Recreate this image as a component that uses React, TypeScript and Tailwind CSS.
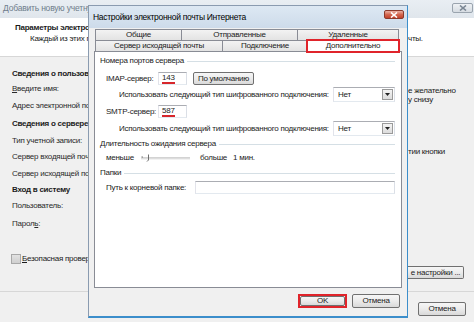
import React from "react";

const btn =
  "flex items-center justify-center border border-[#707070] rounded-[2px] bg-gradient-to-b from-[#f6f6f6] via-[#ebebeb] to-[#d9d9d9] text-[#1b1b1b] whitespace-nowrap";
const field = "bg-white border border-[#abadb3] border-b-[#e3e9ef] border-r-[#dbdfe6] border-l-[#e2e3ea]";

function XIcon({ color }: { color: string }) {
  return (
    <svg width="8" height="6" viewBox="0 0 8 6">
      <path d="M1 0.5 L7 5.5 M7 0.5 L1 5.5" stroke={color} strokeWidth="1.6" />
    </svg>
  );
}

function Select() {
  return (
    <div className={`ml-auto w-[62px] h-full flex items-center ${field} border-[#abadb3]`}>
      <span className="pl-[4px] flex-1">Нет</span>
      <div className="mr-[1px] w-[11px] h-[11px] border border-[#9a9a9a] bg-gradient-to-b from-[#f4f4f4] to-[#dcdcdc] flex items-center justify-center">
        <svg width="5" height="3" viewBox="0 0 5 3">
          <path d="M0 0 H5 L2.5 3 Z" fill="#222" />
        </svg>
      </div>
    </div>
  );
}

function GroupHead({ label }: { label: string }) {
  return (
    <div className="h-[12px] flex items-center gap-[3px]">
      <span className="whitespace-nowrap">{label}</span>
      <div className="flex-1 h-px bg-[#d5dfe5]" />
    </div>
  );
}

function Tab({ w, label, first, selected }: { w: number; label: string; first?: boolean; selected?: boolean }) {
  return (
    <div
      style={{ width: w }}
      className={`h-full flex items-center justify-center whitespace-nowrap border border-[#898c95] ${first ? "" : "-ml-px"} ${
        selected
          ? "relative bg-white outline-2 outline-[#e0242b] -outline-offset-1 z-10"
          : "bg-gradient-to-b from-[#f3f3f3] to-[#e3e3e3]"
      }`}
    >
      {label}
    </div>
  );
}

export default function App() {
  const leftItems: { t: React.ReactNode; mt: number; bold?: boolean }[] = [
    { t: "Сведения о пользователе", mt: 12, bold: true },
    { t: <><u>В</u>ведите имя:</>, mt: 5 },
    { t: "Адрес электронной почты:", mt: 7 },
    { t: "Сведения о сервере", mt: 8, bold: true },
    { t: "Тип учетной записи:", mt: 7 },
    { t: "Сервер входящей почты:", mt: 6 },
    { t: "Сервер исходящей почты (SMTP):", mt: 7 },
    { t: "Вход в систему", mt: 6, bold: true },
    { t: "Пользователь:", mt: 6 },
    { t: <>Парол<u>ь</u>:</>, mt: 8 },
  ];

  return (
    <div className="relative w-[474px] h-[322px] overflow-hidden bg-[#f0f0f0] font-['Liberation_Sans',Arial,sans-serif] text-[8px] tracking-[-0.25px] leading-[10px] text-[#1b1b1b]">
      {/* background window */}
      <div className="flex flex-col h-full">
        <div className="h-[18px] flex items-start bg-gradient-to-b from-[#e9eef3] to-[#e0e6ec]">
          <span className="pl-[3px] pt-[3px] text-[8.5px] tracking-[-0.2px] text-[#6f7d8c] whitespace-nowrap">
            Добавить новую учетную запись
          </span>
          <div className="ml-auto mr-[1px] mt-[3px] w-[21px] h-[10px] border border-[#9aa4ae] rounded-[2px] bg-gradient-to-b from-[#eef1f4] to-[#d6dce2] flex items-center justify-center">
            <XIcon color="#7b8794" />
          </div>
        </div>
        <div className="h-[39px] bg-white border-b border-[#d7d7d7] flex flex-col">
          <div className="pl-[15px] pt-[5px] font-bold whitespace-nowrap">Параметры электронной почты</div>
          <div className="grid grid-cols-[408px_1fr] mt-[1px]">
            <div className="pl-[30px] overflow-hidden whitespace-nowrap">
              Каждый из этих параметров необходим для работы учетной записи электронной по
            </div>
            <div className="whitespace-nowrap">чты.</div>
          </div>
        </div>
        <div className="h-[235px] flex border-b border-[#d7d7d7]">
          <div className="w-[88px] overflow-hidden flex flex-col pl-[12px]">
            {leftItems.map((it, i) => (
              <div
                key={i}
                style={{ marginTop: it.mt }}
                className={`h-[10px] whitespace-nowrap ${it.bold ? "font-bold" : "text-[#2a2a2a]"}`}
              >
                {it.t}
              </div>
            ))}
            <div className="mt-[25px] h-[10px] -ml-px flex items-center gap-[1px] whitespace-nowrap">
              <div className="w-[10px] h-[10px] shrink-0 border border-[#a8a8a8] bg-gradient-to-b from-[#e2e2e2] to-[#cfcfcf]" />
              <span>
                <u>Б</u>езопасная проверка пароля (SPA)
              </span>
            </div>
          </div>
          <div className="w-[320px]" />
          <div className="flex-1 flex flex-col overflow-hidden">
            <div className="mt-[29px] h-[9px] whitespace-nowrap">е желательно</div>
            <div className="h-[9px] whitespace-nowrap">у снизу</div>
            <div className="mt-[43px] h-[10px] whitespace-nowrap">тии кнопки</div>
            <div className={`mt-[109px] w-[56px] h-[13px] ${btn} border-l-0 rounded-l-none`}>
              е настройки ...
            </div>
          </div>
        </div>
        <div className="flex-1 flex justify-end pr-[8px]">
          <div className={`mt-[10px] w-[48px] h-[14px] ${btn}`}>Отмена</div>
        </div>
      </div>

      {/* dialog */}
      <div className="absolute left-[88px] top-[5px] w-[320px] h-[313px] flex flex-col bg-[#f0f0f0] border border-[#8a9bb0] border-r-[#3c8ecb] border-b-2 border-b-[#3c8ecb]">
        <div className="h-[22px] flex items-start bg-gradient-to-b from-[#dde8f3] to-[#cddbea]">
          <span className="pl-[4px] pt-[6px] text-[8.5px] tracking-[-0.3px] text-black whitespace-nowrap">
            Настройки электронной почты Интернета
          </span>
          <div className="ml-auto mr-[3px] mt-[4px] w-[20px] h-[9px] rounded-[2px] border border-[#8b3a2c] bg-gradient-to-b from-[#eab0a4] via-[#d36750] to-[#c2402a] flex items-center justify-center">
            <XIcon color="#ffffff" />
          </div>
        </div>
        <div className="flex-1 flex flex-col px-[5px] pt-[1px]">
          <div className="ml-[1px] h-[12px] flex">
            <Tab w={87} label="Общие" first />
            <Tab w={117} label="Отправленные" />
            <Tab w={102} label="Удаленные" />
          </div>
          <div className="ml-[1px] h-[12px] flex -mt-px">
            <Tab w={128} label="Сервер исходящей почты" first />
            <Tab w={86} label="Подключение" />
            <Tab w={92} label="Дополнительно" selected />
          </div>
          <div className="h-[237px] -mt-px bg-white border border-[#898c95] flex flex-col pl-[5px] pr-[6px]">
            <div className="mt-[3px]">
              <GroupHead label="Номера портов сервера" />
            </div>
            <div className="mt-[5px] h-[13px] flex items-center pl-[6px]">
              <span className="w-[52px] whitespace-nowrap">IMAP-сервер:</span>
              <div className={`w-[29px] h-full flex items-center pl-[3px] ${field}`}>
                <span className="border-b-2 border-[#d7262b] leading-[8px]">143</span>
              </div>
              <div className={`ml-[6px] w-[61px] h-full ${btn}`}>По умолчанию</div>
            </div>
            <div className="mt-[2px] h-[15px] flex items-center pl-[19px]">
              <span className="whitespace-nowrap">Использовать следующий тип шифрованного подключения:</span>
              <Select />
            </div>
            <div className="mt-[3px] h-[13px] flex items-center pl-[6px]">
              <span className="w-[52px] whitespace-nowrap">SMTP-сервер:</span>
              <div className={`w-[29px] h-full flex items-center pl-[3px] ${field}`}>
                <span className="border-b-2 border-[#d7262b] leading-[8px]">587</span>
              </div>
            </div>
            <div className="mt-[3px] h-[15px] flex items-center pl-[19px]">
              <span className="whitespace-nowrap">Использовать следующий тип шифрованного подключения:</span>
              <Select />
            </div>
            <div className="mt-[2px]">
              <GroupHead label="Длительность ожидания сервера" />
            </div>
            <div className="mt-[1px] h-[13px] flex items-center pl-[6px]">
              <span className="w-[34px] whitespace-nowrap">меньше</span>
              <svg width="50" height="10" viewBox="0 0 50 10" className="shrink-0">
                <line x1="1" y1="5" x2="50" y2="5" stroke="#a7a7a7" strokeWidth="1" />
                <line x1="1" y1="6" x2="50" y2="6" stroke="#e6e6e6" strokeWidth="1" />
                <path d="M2 3 L2.5 5" stroke="#9a9a9a" strokeWidth="1" />
                <path d="M8.5 1.5 V7 L7 8.5" stroke="#6e6e6e" strokeWidth="1" fill="none" />
              </svg>
              <span className="ml-[10px] w-[33px] whitespace-nowrap">больше</span>
              <span className="whitespace-nowrap">1 мин.</span>
            </div>
            <div className="mt-[3px]">
              <GroupHead label="Папки" />
            </div>
            <div className="mt-[2px] h-[13px] flex items-center pl-[6px]">
              <span className="w-[89px] whitespace-nowrap">Путь к корневой папке:</span>
              <div className={`flex-1 h-full ${field}`} />
            </div>
          </div>
          <div className="flex justify-end gap-[5px] mr-[2px] mt-[6px]">
            <div className="w-[49px] h-[14px] border-2 border-[#e0242b] flex">
              <div className={`flex-1 ${btn}`}>OK</div>
            </div>
            <div className={`w-[48px] h-[14px] ${btn}`}>Отмена</div>
          </div>
        </div>
      </div>
    </div>
  );
}
